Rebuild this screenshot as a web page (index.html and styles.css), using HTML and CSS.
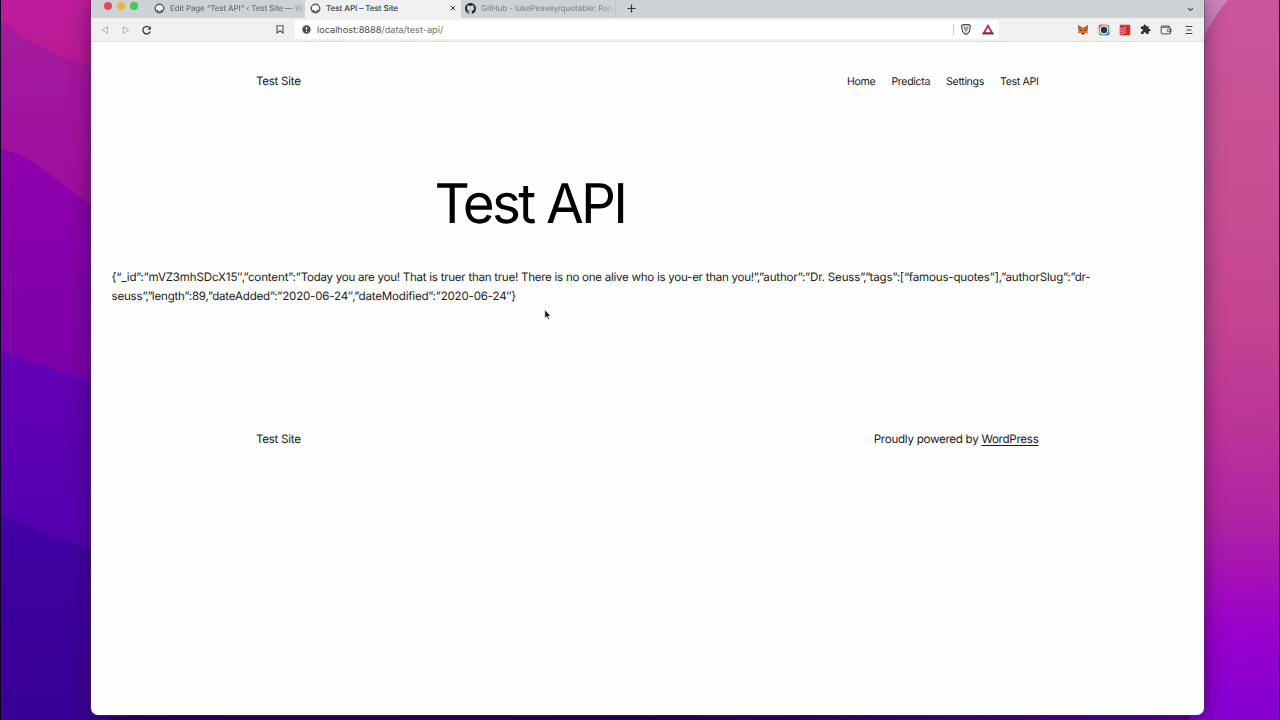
FILE: index.html
```html
<!DOCTYPE html>
<html lang="en">
<head>
<meta charset="utf-8">
<title>Test API – Test Site</title>
<link rel="stylesheet" href="styles.css">
</head>
<body>
<svg class="wallpaper" viewBox="0 0 1280 720" aria-hidden="true">
  <defs>
    <linearGradient id="left-top" x1="0" y1="0" x2="0" y2="1"><stop offset="0" stop-color="#bd1c9b"/><stop offset="1" stop-color="#b6178e"/></linearGradient>
    <linearGradient id="left-two" x1="0" y1="0" x2="0" y2="1"><stop offset="0" stop-color="#a51a9e"/><stop offset="1" stop-color="#9d0c9d"/></linearGradient>
    <linearGradient id="left-three" x1="0" y1="0" x2="0" y2="1"><stop offset="0" stop-color="#8f00ac"/><stop offset="1" stop-color="#7900a8"/></linearGradient>
    <linearGradient id="left-four" x1="0" y1="0" x2="0" y2="1"><stop offset="0" stop-color="#6400b4"/><stop offset="1" stop-color="#5000b0"/></linearGradient>
    <linearGradient id="left-five" x1="0" y1="0" x2="0" y2="1"><stop offset="0" stop-color="#4400a4"/><stop offset="1" stop-color="#380094"/></linearGradient>
    <linearGradient id="right" gradientUnits="userSpaceOnUse" x1="1230" y1="0" x2="1250" y2="720"><stop offset="0" stop-color="#c9559a"/><stop offset=".26" stop-color="#c74f92"/><stop offset=".45" stop-color="#c54391"/><stop offset=".6" stop-color="#ba3398"/><stop offset=".72" stop-color="#b024a4"/><stop offset=".8" stop-color="#a60fb8"/><stop offset=".88" stop-color="#9900cc"/><stop offset="1" stop-color="#8400d2"/></linearGradient>
    <linearGradient id="base" x1="0" y1="0" x2="1" y2="0"><stop offset="0" stop-color="#2a0070"/><stop offset=".5" stop-color="#24005e"/><stop offset="1" stop-color="#6a00b0"/></linearGradient>
  </defs>
  <rect width="1280" height="720" fill="url(#base)"/>
  <rect width="110" height="110" fill="url(#left-top)"/>
  <path d="M0 20C30 42 60 62 110 70V230H0Z" fill="url(#left-two)"/>
  <path d="M0 149C34 154 60 186 110 218V400H0Z" fill="url(#left-three)"/>
  <path d="M0 350C30 361 60 374 110 382V580H0Z" fill="url(#left-four)"/>
  <path d="M0 515C30 525 60 543 110 553V720H0Z" fill="url(#left-five)"/>
  <rect x="1190" width="90" height="720" fill="url(#right)"/>
  <path d="M1190 0H1228Q1214 16 1204 36V48H1190Z" fill="#cb83b8"/>
  <path d="M.5 0V720M1279.5 0V720" stroke="#12052a"/>
</svg>

<div class="window">
  <div class="tabs">
    <div class="lights"><i class="red"></i><i class="yellow"></i><i class="green"></i></div>
    <div class="tab tab-first">
      <svg class="favicon" viewBox="0 0 12 12"><circle cx="6" cy="6" r="5.4" fill="#5f6466"/><path d="M2.200 7.800V5.200Q2.200 2.600 4.300 2.500Q6 1.700 7.700 2.500Q9.800 2.600 9.800 5.200V7.800L8 7L7 9H5L4 7Z" fill="#eef0f1"/></svg>
      <span class="label label-edit">Edit Page “Test API” ‹ Test Site — W</span>
    </div>
    <div class="tab tab-active">
      <svg class="favicon" viewBox="0 0 12 12"><circle cx="6" cy="6" r="5.4" fill="#5c5c5c"/><path d="M2.200 7.800V5.200Q2.200 2.600 4.300 2.500Q6 1.700 7.700 2.500Q9.800 2.600 9.800 5.200V7.800L8 7L7 9H5L4 7Z" fill="#fff"/></svg>
      <span class="label label-active">Test API – Test Site</span>
      <svg class="close" viewBox="0 0 6 6"><path d="M.8.8L5.2 5.2M5.2.8L.8 5.2" stroke="#333" stroke-width="1"/></svg>
    </div>
    <div class="tab tab-last">
      <svg class="favicon" viewBox="0 0 16 16"><path fill="#24292e" d="M8 0C3.58 0 0 3.58 0 8c0 3.54 2.29 6.53 5.47 7.59.4.07.55-.17.55-.38 0-.19-.01-.82-.01-1.49-2.01.37-2.53-.49-2.69-.94-.09-.23-.48-.94-.82-1.13-.28-.15-.68-.52-.01-.53.63-.01 1.08.58 1.23.82.72 1.21 1.87.87 2.33.66.07-.52.28-.87.51-1.07-1.78-.2-3.64-.89-3.64-3.95 0-.87.31-1.59.82-2.15-.08-.2-.36-1.02.08-2.12 0 0 .67-.21 2.2.82a7.6 7.6 0 0 1 4 0c1.53-1.04 2.2-.82 2.2-.82.44 1.1.16 1.92.08 2.12.51.56.82 1.27.82 2.15 0 3.07-1.87 3.75-3.65 3.95.29.25.54.73.54 1.48 0 1.07-.01 1.93-.01 2.2 0 .21.15.46.55.38A8 8 0 0 0 16 8c0-4.42-3.58-8-8-8z"/></svg>
      <span class="label label-git">GitHub - lukePeavey/quotable: Ran</span>
    </div>
    <svg class="plus" viewBox="0 0 9 9"><path d="M4.5.5V8.5M.5 4.500H8.500" stroke="#333" stroke-width="1.2"/></svg>
    <svg class="chevron" viewBox="0 0 7 5"><path d="M1 1L3.5 3.5L6 1" fill="none" stroke="#555" stroke-width="1.1"/></svg>
  </div>

  <div class="toolbar">
    <div class="nav-icons">
      <svg width="8" height="10" viewBox="0 0 8 10"><path d="M6.6 1.6V8.4L1.2 5Z" fill="none" stroke="#b2b2b2"/></svg>
      <svg width="8" height="10" viewBox="0 0 8 10"><path d="M1.4 1.6V8.4L6.8 5Z" fill="none" stroke="#b2b2b2"/></svg>
      <svg width="11" height="11" viewBox="0 0 11 11"><path d="M8.6 2.7A3.8 3.8 0 1 0 9.2 6.6" fill="none" stroke="#333" stroke-width="1.3"/><path d="M9.8 1.200V4.400H6.600Z" fill="#222"/></svg>
    </div>
    <svg class="bookmark" viewBox="0 0 8 9"><path d="M1 .8H7V8L4 5.8L1 8Z" fill="none" stroke="#505050" stroke-width="1.1"/></svg>
    <div class="address">
      <svg class="info" viewBox="0 0 9 9"><circle cx="4.5" cy="4.5" r="4.2" fill="#505050"/><path d="M4.5 2V5M4.5 6V7" stroke="#fff" stroke-width="1.1"/></svg>
      <span class="url">localhost:8888<span>/data/test-api/</span></span>
      <i class="divider"></i>
      <svg class="brave" viewBox="0 0 12 13"><path d="M3.2 1H8.8L11 2.6L10 8.5Q8.800 10.800 6 12.200Q3.200 10.800 2 8.500L1 2.600Z" fill="#46484c"/><path d="M3.500 2.200H8.500L9.800 3.300L9 8Q8 9.800 6 11Q4 9.800 3 8L2.200 3.300Z" fill="#f3f3f3"/><path d="M3.200 3.700L4.500 3.200L6 3.700L7.500 3.200L8.800 3.700L7.700 7.100L6.800 8.200L6 8L5.200 8.200L4.300 7.100Z" fill="#a2a2a2"/><path d="M5 9L6 8.600L7 9L6 9.800Z" fill="#555"/></svg>
      <svg class="bat" viewBox="0 0 12 11"><path d="M6 1.800L10.400 9.300H1.600Z" fill="none" stroke="#b5244f" stroke-width="1.800"/><path d="M.2 10.200H11.800L10.800 8.500H1.200Z" fill="#5f2469"/></svg>
    </div>
    <div class="extensions">
      <svg width="12" height="12" viewBox="0 0 12 12"><path d="M1 1L5 3.3H7L11 1L10.5 6.2L11 9L8.400 8.900L7 10.500H5L3.600 8.900L1 9L1.500 6.200Z" fill="#df7425"/><path d="M1 1L4.800 4L4 6.700L1.500 6.200ZM11 1L7.200 4L8 6.700L10.500 6.200Z" fill="#ba5b25"/><path d="M3.500 6H4.800V7H3.500ZM7.200 6H8.500V7H7.200ZM5 9H7V10.200H5Z" fill="#3b2924"/></svg>
      <svg width="12" height="12" viewBox="0 0 12 12"><defs><linearGradient id="rainbow" x1="0" y1="0" x2="1" y2="1"><stop stop-color="#e93e9a"/><stop offset=".4" stop-color="#dfad55"/><stop offset=".65" stop-color="#4cbcb4"/><stop offset="1" stop-color="#7850dc"/></linearGradient></defs><rect x=".6" y=".6" width="10.800" height="10.800" rx="1.500" fill="url(#rainbow)"/><circle cx="6" cy="6" r="4.200" fill="#e8f2f4"/><circle cx="6" cy="6" r="3.200" fill="#24354e"/></svg>
      <svg width="12" height="12" viewBox="0 0 12 12"><rect x=".7" y=".7" width="10.600" height="10.600" rx="1.200" fill="#d92c31"/><path d="M1 4.200L3 5.100L7 2.900M1 6.600L3 7.500L7 5.300M1 9L3 9.900L7 7.700" fill="none" stroke="#fff" stroke-opacity=".85" stroke-width=".7"/></svg>
      <svg width="11" height="11" viewBox="0 0 24 24"><path fill="#333" d="M20.5 11H19V7a2 2 0 0 0-2-2h-4V3.500a2.500 2.500 0 0 0-5 0V5H4a2 2 0 0 0-2 2v3.800h1.500a2.700 2.700 0 0 1 0 5.400H2V20a2 2 0 0 0 2 2h3.800v-1.500a2.700 2.700 0 0 1 5.400 0V22H17a2 2 0 0 0 2-2v-4h1.500a2.500 2.500 0 0 0 0-5z"/></svg>
      <svg width="12" height="12" viewBox="0 0 12 12"><path d="M1.2 3.200V9Q1.200 9.900 2.100 9.900H9.600Q10.500 9.900 10.500 9V4.200Q10.500 3.300 9.600 3.300H2Q1.200 3.200 1.200 2.600Q1.200 2 2 2H9.200V3.300M11 5.300H8.300Q7.300 5.300 7.300 6.500Q7.300 7.700 8.300 7.700H11Z" fill="none" stroke="#444" stroke-width=".95"/></svg>
      <svg class="hamburger" width="12" height="12" viewBox="0 0 12 12"><path d="M2.500 2.500H9.500M3.500 6H8.500M2.500 9.500H9.500" stroke="#444" stroke-width="1"/></svg>
    </div>
  </div>

  <main class="page">
    <header class="site-header">
      <span class="site-name">Test Site</span>
      <nav class="menu"><a>Home</a><a>Predicta</a><a>Settings</a><a>Test API</a></nav>
    </header>
    <h1>Test API</h1>
    <p class="result"><span class="line"><span class="json-id">{“_id”:”mVZ3mhSDcX15<span class="tight">″,”</span>content”:”</span><span class="json-quote">Today you are you! That is truer than true! There is no one alive who is you-er than you!</span><span class="json-meta"><span class="tight">”,”</span>author”:”Dr. Seuss<span class="tight">”,”</span>tags”:[“famous-quotes”],”authorSlug”:”dr-</span></span><span class="line json-dates">seuss<span class="tight">”,”</span>length”:89,”dateAdded”:”2020-06-24<span class="tight">″,”</span>dateModified”:”2020-06-24″}</span></p>
    <footer class="site-footer">
      <span class="site-name">Test Site</span>
      <span class="powered">Proudly powered by <a>WordPress</a></span>
    </footer>
  </main>
</div>
<svg class="cursor" viewBox="0 0 8 12"><path d="M.8.8V9.200L2.700 7.600L4 10.600L5.400 10L4.200 7.100H6.700Z" fill="#111" stroke="#fff" stroke-width=".6"/></svg>
</body>
</html>
```
FILE: styles.css
```css
* { box-sizing: border-box; }
body { margin: 0; width: 1280px; height: 720px; overflow: hidden; font-family: Inter, sans-serif; color: #1a1a1a; text-rendering: geometricPrecision; }
svg { display: block; flex: none; }
.wallpaper { position: absolute; left: 0; top: 0; width: 1280px; height: 720px; }
.window { position: relative; width: 1113px; height: 715px; margin-left: 91px; background: #fefefe; border-radius: 0 0 7px 7px; overflow: hidden; box-shadow: 0 0 0 1px rgba(90,60,100,.4), 0 4px 20px rgba(20,0,40,.5); }
.tabs { height: 18px; display: flex; align-items: center; background: #cdd2d4; padding-right: 10px; }
.lights { display: flex; gap: 5px; padding-left: 13px; width: 57px; height: 12px; }
.lights i { width: 8px; height: 8px; border-radius: 50%; margin-top: -1px; }
.red { background: #e2465b; }
.yellow { background: #e9b53d; }
.green { background: #49c84c; }
.tab { display: flex; align-items: center; height: 18px; padding-bottom: 2px; font-size: 8px; font-weight: 500; white-space: nowrap; }
.tab-first { width: 157px; padding-left: 6px; color: #6b7073; }
.tab-active { width: 156px; background: #f0f0f0; padding-left: 5px; color: #3a3a3a; }
.tab-last { width: 155px; padding-left: 4px; color: #85898c; border-right: 1px solid #bfc4c6; }
.favicon { width: 11px; height: 11px; }
.label { flex: none; margin-left: 5px; line-height: 12px; letter-spacing: -.04px; }
.label-edit { letter-spacing: -.14px; }
.label-git { letter-spacing: -.05px; }
.label-edit, .label-git { -webkit-mask-image: linear-gradient(to right, #000 88%, rgba(0,0,0,.25)); mask-image: linear-gradient(to right, #000 88%, rgba(0,0,0,.25)); }
.close { width: 6px; height: 6px; margin: 0 5px 0 auto; }
.plus { width: 9px; height: 9px; margin: -1px 0 0 11px; }
.chevron { width: 7px; height: 5px; margin-left: auto; }
.toolbar { height: 24px; display: flex; align-items: center; background: #f0f0f0; border-bottom: 1px solid #dedede; }
.nav-icons { display: flex; align-items: center; gap: 13px; width: 185px; padding-left: 10px; }
.nav-icons svg:last-child { margin: 1px 0 0 -2px; }
.bookmark { width: 8px; height: 9px; }
.address { display: flex; align-items: center; width: 704px; height: 19px; margin-left: 11px; padding-left: 7px; background: #fff; }
.info { width: 9px; height: 9px; }
.url { font-size: 9.2px; margin: 1px 0 0 6px; color: #505050; letter-spacing: -.02px; }
.url span { color: #707070; }
.divider { width: 1px; height: 11px; margin-left: auto; background: #ccc; }
.brave { width: 12px; height: 13px; margin-left: 6px; }
.bat { width: 12px; height: 11px; margin: 0 5px 0 10px; }
.extensions { display: flex; gap: 9px; margin-left: 78px; }
.hamburger { margin-left: 2px; }
.page { height: 673px; }
.site-header { display: flex; justify-content: space-between; align-items: center; height: 78px; padding: 0 165.5px 0 165px; }
.site-name, .powered { font-size: 11.6px; letter-spacing: -.28px; }
.menu { display: flex; gap: 16px; font-size: 10.6px; letter-spacing: -.33px; }
h1 { margin: 50px 0 0 343.5px; font-weight: 400; font-size: 54.8px; line-height: 68px; letter-spacing: -2.75px; color: #000; }
.result { margin: 29.5px 0 0 20.5px; font-size: 11.55px; line-height: 19px; color: #222; }
.line { display: block; width: max-content; white-space: nowrap; }
.json-id { letter-spacing: -.14px; }
.json-quote { letter-spacing: -.26px; }
.json-meta { letter-spacing: -.17px; }
.json-dates { letter-spacing: -.19px; }
.tight { letter-spacing: -.75px; }
.site-footer { display: flex; justify-content: space-between; align-items: center; height: 20px; margin-top: 123.5px; padding: 0 165.5px 0 165px; }
.site-footer a { text-decoration: underline; text-underline-offset: 1.5px; }
.cursor { position: absolute; left: 544px; top: 309px; width: 8px; height: 12px; }
```
